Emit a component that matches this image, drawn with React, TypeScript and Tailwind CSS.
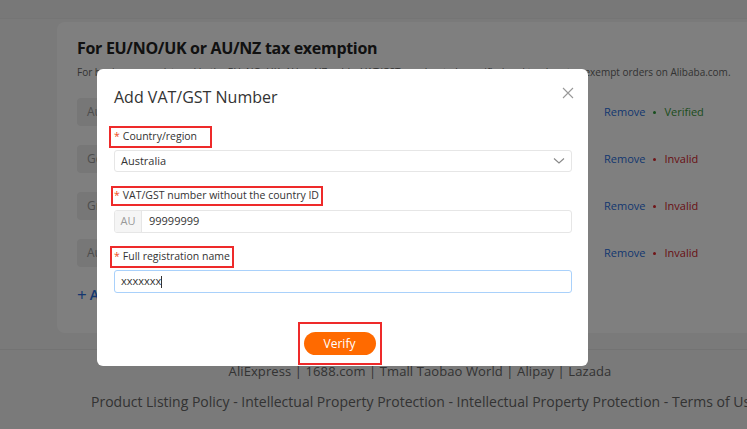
import React from "react";

const rows = [
  { name: "Australia", status: "Verified" },
  { name: "Germany", status: "Invalid" },
  { name: "Greece", status: "Invalid" },
  { name: "Austria", status: "Invalid" },
];

function Label({ text, boxClass }: { text: string; boxClass: string }) {
  return (
    <div className={`flex w-fit items-center whitespace-nowrap border-2 border-[#ee2a2a] ${boxClass}`}>
      <span className="text-[#f04a1a] text-[10.5px] mr-[3px]">*</span>
      <span className="text-[10.5px] text-[#333]">{text}</span>
    </div>
  );
}

export default function App() {
  return (
    <div
      className="relative w-[747px] h-[429px] overflow-hidden bg-[#f5f5f5]"
      style={{ fontFamily: '"Open Sans", "Liberation Sans", sans-serif' }}
    >
      {/* underlying page */}
      <div className="h-[19px] bg-[#f0f0f0] border-b border-[#ebebeb]" />
      <div className="ml-[57px] mt-[3px] w-[720px] h-[311px] bg-white rounded-lg pl-[20px] pt-[14px]">
        <h2 className="text-[16px] tracking-[-0.3px] font-bold text-[#222] leading-[24px]">
          For EU/NO/UK or AU/NZ tax exemption
        </h2>
        <p className="mt-[5px] text-[10px] text-[#666] whitespace-nowrap leading-[14px]">
          For businesses registered in the EU, NO, UK, AU or NZ, add a VAT/GST number to be verified and to place tax-exempt orders on Alibaba.com.
        </p>
        <div className="mt-[19px] flex flex-col gap-[19px]">
          {rows.map((r) => (
            <div key={r.name} className="flex items-center h-[28px]">
              <div className="w-[500px] h-[28px] rounded bg-[#eeeeee] flex items-center px-[10px] text-[12px] text-[#999]">
                {r.name}
              </div>
              <div className="ml-[27px] flex items-center text-[11px]">
                <span className="text-[#2a6fe0]">Remove</span>
                <span
                  className={`mx-[8px] w-[3px] h-[3px] rounded-full ${
                    r.status === "Verified" ? "bg-[#2e9b3a]" : "bg-[#e0282e]"
                  }`}
                />
                <span className={r.status === "Verified" ? "text-[#3a9a3a]" : "text-[#d2232a]"}>{r.status}</span>
              </div>
            </div>
          ))}
        </div>
        <div className="mt-[15px] text-[#2a6fe0] text-[14px] font-semibold flex items-center">
          <span className="text-[17px] mr-[3px] font-normal">+</span>Add VAT/GST number
        </div>
      </div>
      <div className="mt-[16px] border-t border-[#e6e6e6]">
        <div className="mt-[12px] text-center text-[13px] tracking-[0.1px] text-[#666] leading-[18px] pl-[93px]">
          AliExpress | 1688.com | Tmall Taobao World | Alipay | Lazada
        </div>
        <div className="mt-[13px] pl-[91px] text-[14px] text-[#666] whitespace-nowrap leading-[18px]">
          Product Listing Policy - Intellectual Property Protection - Intellectual Property Protection - Terms of Use
        </div>
      </div>

      {/* overlay */}
      <div className="absolute inset-0 bg-black/50" />

      {/* modal */}
      <div className="absolute left-[97px] top-[69px] w-[491px] h-[297px] bg-white rounded-[6px] pl-[12px] pr-[16px]">
        <div className="flex items-center justify-between h-[56px] pl-[5px]">
          <span className="text-[16px] text-[#333]">Add VAT/GST Number</span>
          <svg width="12" height="12" viewBox="0 0 12 12" className="mr-[-2px] mb-[9px]">
            <path d="M1 1L11 11M11 1L1 11" stroke="#999" strokeWidth="1.1" />
          </svg>
        </div>
        <Label text="Country/region" boxClass="ml-0 mt-[1px] h-[22px] pl-[3px] pr-[13px]" />
        <div className="ml-[5px] mt-[2px] h-[22px] border border-[#e6e6e6] rounded-[3px] flex items-center justify-between pl-[6px] pr-[6px]">
          <span className="text-[11px] text-[#333]">Australia</span>
          <svg width="12" height="8" viewBox="0 0 12 8">
            <path d="M1 1.5L6 6L11 1.5" stroke="#888" strokeWidth="1.1" fill="none" />
          </svg>
        </div>
        <Label text="VAT/GST number without the country ID" boxClass="ml-[2px] mt-[14px] h-[20px] pl-[1px] pr-[2px]" />
        <div className="ml-[5px] mt-[4px] h-[23px] border border-[#e6e6e6] rounded-[3px] flex items-stretch overflow-hidden">
          <div className="w-[27px] bg-[#f5f5f5] border-r border-[#e6e6e6] flex items-center justify-center text-[11px] text-[#999]">
            AU
          </div>
          <div className="flex items-center pl-[7px] text-[11px] text-[#333]">99999999</div>
        </div>
        <Label text="Full registration name" boxClass="ml-[1px] mt-[13px] h-[22px] pl-[2px] pr-[2px]" />
        <div className="ml-[5px] mt-[2px] h-[23px] border border-[#a9d1fb] rounded-[3px] flex items-center pl-[6px]">
          <span className="text-[11px] text-[#333]">xxxxxxx</span>
          <span className="w-px h-[12px] bg-[#333]" />
        </div>
        <div className="flex justify-center mt-[29px] ml-[-2px]">
          <div className="w-[84px] h-[43px] border-2 border-[#ee2a2a] flex items-center justify-center">
            <div className="w-[72px] h-[23px] rounded-full bg-[#ff6a00] text-white text-[12px] flex items-center justify-center">
              Verify
            </div>
          </div>
        </div>
      </div>
    </div>
  );
}
